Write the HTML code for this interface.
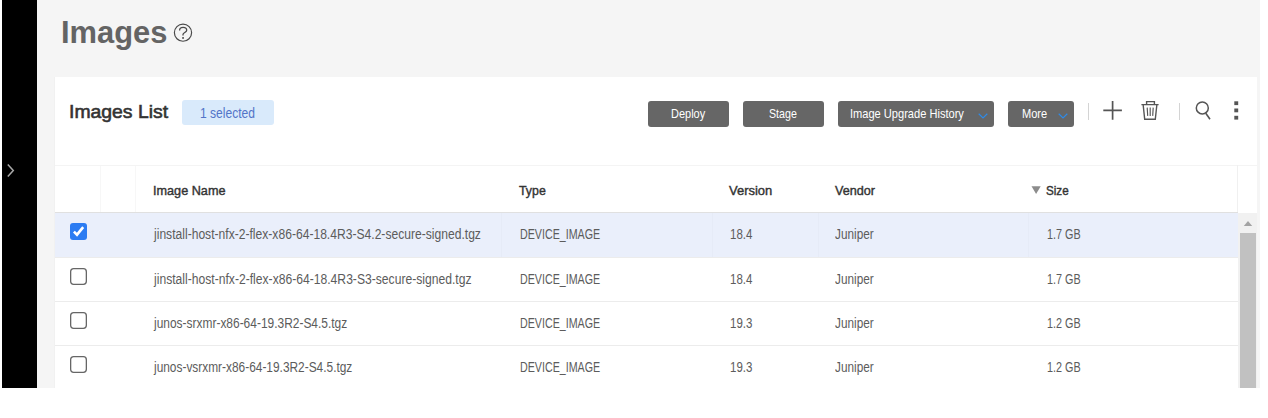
<!DOCTYPE html>
<html><head><meta charset="utf-8">
<style>
*{box-sizing:border-box;margin:0;padding:0}
html,body{width:1268px;height:418px;overflow:hidden;background:#fff;font-family:"Liberation Sans",sans-serif}
.a{position:absolute}
.t{white-space:nowrap;line-height:1;transform-origin:0 0}
.cb{width:17px;height:17px;border:1.6px solid #6a6a6a;border-radius:3px;background:#fff}
</style></head><body>
<div class="a" style="left:2px;top:0;width:35px;height:388px;background:#000"></div>
<svg class="a" style="left:0;top:160px" width="24" height="22"><polyline points="7.8,4.4 13.3,10.4 7.8,16.4" fill="none" stroke="#a8a8a8" stroke-width="1.5"/></svg>
<div class="a" style="left:37px;top:0;width:1223px;height:388px;background:#f5f5f5"></div>
<div class="a" style="left:54px;top:77px;width:1203px;height:311px;background:#fff;border-left:1px solid #f1f1f1"></div>
<svg class="a" style="left:170px;top:20px" width="26" height="26" viewBox="170 20 26 26"><circle cx="183" cy="32.65" r="8.6" fill="none" stroke="#4a4a4a" stroke-width="1.2"/><path d="M179.6 30.4C179.6 28.4 181.1 27.4 183.1 27.4C185.2 27.4 186.7 28.6 186.7 30.3C186.7 32.3 183 32.8 183 34.6V35.4" fill="none" stroke="#4a4a4a" stroke-width="1.3"/><rect x="182.2" y="37.1" width="1.7" height="1.7" fill="#4a4a4a"/></svg>
<div class="a" style="left:182px;top:100px;width:92px;height:25px;background:#d9eafb;border-radius:3px"></div>
<div class="a" style="left:648px;top:101px;width:81px;height:26px;background:#666;border-radius:3px"></div>
<div class="a" style="left:743px;top:101px;width:81px;height:26px;background:#666;border-radius:3px"></div>
<div class="a" style="left:838px;top:101px;width:156px;height:26px;background:#666;border-radius:3px"></div>
<div class="a" style="left:1008px;top:101px;width:66px;height:26px;background:#666;border-radius:3px"></div>
<svg class="a" style="left:978px;top:113px" width="11" height="7"><polyline points="0.7,0.8 5,5 9.3,0.8" fill="none" stroke="#2e8ae6" stroke-width="1.2"/></svg>
<svg class="a" style="left:1058px;top:113px" width="11" height="7"><polyline points="0.7,0.8 5,5 9.3,0.8" fill="none" stroke="#2e8ae6" stroke-width="1.2"/></svg>
<div class="a" style="left:1088px;top:103px;width:1px;height:17px;background:#d4d4d4"></div>
<div class="a" style="left:1179px;top:103px;width:1px;height:17px;background:#d4d4d4"></div>
<svg class="a" style="left:1100px;top:98px" width="26" height="26" viewBox="1100 98 26 26"><path d="M1112.6 101v18.7M1103.3 110.4h18.6" stroke="#555" stroke-width="1.7" fill="none"/></svg>
<svg class="a" style="left:1138px;top:98px" width="24" height="24" viewBox="1138 98 24 24"><path d="M1146.6 104.5v-2.9h7.8v2.9M1141.4 104.6h17.2M1143.2 105.2l1.5 14.1h10.6l1.5-14.1" stroke="#555" stroke-width="1.4" fill="none"/><path d="M1147.2 107.6l0.5 8.3M1150.2 107.6v8.3M1153.2 107.6l-0.5 8.3" stroke="#555" stroke-width="1.15" fill="none"/></svg>
<svg class="a" style="left:1190px;top:98px" width="26" height="26" viewBox="1190 98 26 26"><circle cx="1202.3" cy="107.9" r="6" fill="none" stroke="#555" stroke-width="1.5"/><path d="M1205.8 113.2l4.2 6" stroke="#555" stroke-width="1.6"/></svg>
<svg class="a" style="left:1230px;top:98px" width="12" height="26" viewBox="1230 98 12 26"><rect x="1234.3" y="101.3" width="3.9" height="3.8" fill="#555"/><rect x="1234.3" y="108.5" width="3.9" height="3.8" fill="#555"/><rect x="1234.3" y="115.8" width="3.9" height="3.8" fill="#555"/></svg>
<div class="a" style="left:55px;top:165px;width:1202px;height:1px;background:#f4f4f4"></div>
<div class="a" style="left:100px;top:166px;width:1px;height:46px;background:#f7f7f7"></div>
<div class="a" style="left:135px;top:166px;width:1px;height:46px;background:#f7f7f7"></div>
<div class="a" style="left:1237px;top:165px;width:1px;height:48px;background:#f0f0f0"></div>
<div class="a" style="left:55px;top:212px;width:1183px;height:1px;background:#e0e0e0"></div>
<svg class="a" style="left:1031px;top:186px" width="10" height="9"><path d="M0.5 0.2h9.2l-4.6 7.7z" fill="#8c8c8c"/></svg>
<div class="a" style="left:55px;top:213px;width:1183px;height:44px;background:#eaeffb"></div>
<div class="a" style="left:501px;top:213px;width:1px;height:44px;background:#e6ebf7"></div>
<div class="a" style="left:712px;top:213px;width:1px;height:44px;background:#e6ebf7"></div>
<div class="a" style="left:818px;top:213px;width:1px;height:44px;background:#e6ebf7"></div>
<div class="a" style="left:1028px;top:213px;width:1px;height:44px;background:#e6ebf7"></div>
<div class="a" style="left:55px;top:257px;width:1183px;height:1px;background:#ececec"></div>
<div class="a" style="left:55px;top:301px;width:1183px;height:1px;background:#ececec"></div>
<div class="a" style="left:55px;top:345px;width:1183px;height:1px;background:#ececec"></div>
<div class="a" style="left:70px;top:223px;width:17px;height:17px;background:#2c7cf2;border-radius:3px"></div>
<svg class="a" style="left:70px;top:223px" width="17" height="17"><polyline points="3.9,8.6 7,11.7 13.2,4.2" fill="none" stroke="#fff" stroke-width="2.6"/></svg>
<svg class="a" style="left:70px;top:268px" width="17" height="17"><rect x="0.65" y="0.65" width="15.7" height="15.7" rx="3" ry="3" fill="#fff" stroke="#666" stroke-width="1.3"/></svg>
<svg class="a" style="left:70px;top:312px" width="17" height="17"><rect x="0.65" y="0.65" width="15.7" height="15.7" rx="3" ry="3" fill="#fff" stroke="#666" stroke-width="1.3"/></svg>
<svg class="a" style="left:70px;top:356px" width="17" height="17"><rect x="0.65" y="0.65" width="15.7" height="15.7" rx="3" ry="3" fill="#fff" stroke="#666" stroke-width="1.3"/></svg>
<div class="a" style="left:1238px;top:213px;width:19px;height:175px;background:#f1f1f1"></div>
<svg class="a" style="left:1243px;top:220px" width="10" height="7"><path d="M0.8 6h8.4l-4.2-5z" fill="#a3a3a3"/></svg>
<div class="a" style="left:1240px;top:233px;width:16px;height:155px;background:#c1c1c1"></div>
<div class="a t" style="left:60.5px;top:16.000000000000004px;font-size:32px;color:#646464;font-weight:bold;transform:scaleX(0.965);">Images</div>
<div class="a t" style="left:69px;top:101.85px;font-size:19px;color:#333;transform:scaleX(1.02);-webkit-text-stroke:0.6px #333;">Images List</div>
<div class="a t" style="left:200px;top:105.5px;font-size:14px;color:#5274c8;transform:scaleX(0.862);">1 selected</div>
<div class="a t" style="left:671px;top:106.75px;font-size:13px;color:#fff;transform:scaleX(0.844);">Deploy</div>
<div class="a t" style="left:769px;top:106.65px;font-size:13px;color:#fff;transform:scaleX(0.818);">Stage</div>
<div class="a t" style="left:850px;top:106.75px;font-size:13px;color:#fff;transform:scaleX(0.852);">Image Upgrade History</div>
<div class="a t" style="left:1022px;top:106.75px;font-size:13px;color:#fff;transform:scaleX(0.85);">More</div>
<div class="a t" style="left:153px;top:183.75px;font-size:13px;color:#333;transform:scaleX(0.974);-webkit-text-stroke:0.4px #333;">Image Name</div>
<div class="a t" style="left:518.5px;top:183.75px;font-size:13px;color:#333;transform:scaleX(0.95);-webkit-text-stroke:0.4px #333;">Type</div>
<div class="a t" style="left:729px;top:183.75px;font-size:13px;color:#333;transform:scaleX(0.998);-webkit-text-stroke:0.4px #333;">Version</div>
<div class="a t" style="left:834.5px;top:183.75px;font-size:13px;color:#333;transform:scaleX(0.971);-webkit-text-stroke:0.4px #333;">Vendor</div>
<div class="a t" style="left:1045.5px;top:183.75px;font-size:13px;color:#333;transform:scaleX(0.896);-webkit-text-stroke:0.4px #333;">Size</div>
<div class="a t" style="left:153.8px;top:226.9px;font-size:14px;color:#5c5c5c;transform:scaleX(0.8645);">jinstall-host-nfx-2-flex-x86-64-18.4R3-S4.2-secure-signed.tgz</div>
<div class="a t" style="left:519.5px;top:226.9px;font-size:14px;color:#5c5c5c;transform:scaleX(0.7633);">DEVICE_IMAGE</div>
<div class="a t" style="left:730.3px;top:226.9px;font-size:14px;color:#5c5c5c;transform:scaleX(0.8209);">18.4</div>
<div class="a t" style="left:835px;top:226.9px;font-size:14px;color:#5c5c5c;transform:scaleX(0.8422);">Juniper</div>
<div class="a t" style="left:1046.5px;top:226.9px;font-size:14px;color:#5c5c5c;transform:scaleX(0.7726);">1.7 GB</div>
<div class="a t" style="left:153.8px;top:271.90000000000003px;font-size:14px;color:#5c5c5c;transform:scaleX(0.8664);">jinstall-host-nfx-2-flex-x86-64-18.4R3-S3-secure-signed.tgz</div>
<div class="a t" style="left:519.5px;top:271.90000000000003px;font-size:14px;color:#5c5c5c;transform:scaleX(0.7633);">DEVICE_IMAGE</div>
<div class="a t" style="left:730.3px;top:271.90000000000003px;font-size:14px;color:#5c5c5c;transform:scaleX(0.8209);">18.4</div>
<div class="a t" style="left:835px;top:271.90000000000003px;font-size:14px;color:#5c5c5c;transform:scaleX(0.8422);">Juniper</div>
<div class="a t" style="left:1046.5px;top:271.90000000000003px;font-size:14px;color:#5c5c5c;transform:scaleX(0.7726);">1.7 GB</div>
<div class="a t" style="left:153.8px;top:315.90000000000003px;font-size:14px;color:#5c5c5c;transform:scaleX(0.8534);">junos-srxmr-x86-64-19.3R2-S4.5.tgz</div>
<div class="a t" style="left:519.5px;top:315.90000000000003px;font-size:14px;color:#5c5c5c;transform:scaleX(0.7633);">DEVICE_IMAGE</div>
<div class="a t" style="left:730.3px;top:315.90000000000003px;font-size:14px;color:#5c5c5c;transform:scaleX(0.8209);">19.3</div>
<div class="a t" style="left:835px;top:315.90000000000003px;font-size:14px;color:#5c5c5c;transform:scaleX(0.8422);">Juniper</div>
<div class="a t" style="left:1046.5px;top:315.90000000000003px;font-size:14px;color:#5c5c5c;transform:scaleX(0.7726);">1.2 GB</div>
<div class="a t" style="left:153.8px;top:359.90000000000003px;font-size:14px;color:#5c5c5c;transform:scaleX(0.8496);">junos-vsrxmr-x86-64-19.3R2-S4.5.tgz</div>
<div class="a t" style="left:519.5px;top:359.90000000000003px;font-size:14px;color:#5c5c5c;transform:scaleX(0.7633);">DEVICE_IMAGE</div>
<div class="a t" style="left:730.3px;top:359.90000000000003px;font-size:14px;color:#5c5c5c;transform:scaleX(0.8209);">19.3</div>
<div class="a t" style="left:835px;top:359.90000000000003px;font-size:14px;color:#5c5c5c;transform:scaleX(0.8422);">Juniper</div>
<div class="a t" style="left:1046.5px;top:359.90000000000003px;font-size:14px;color:#5c5c5c;transform:scaleX(0.7726);">1.2 GB</div>
<div class="a" style="left:0;top:388px;width:1268px;height:30px;background:#fff"></div>
</body></html>
